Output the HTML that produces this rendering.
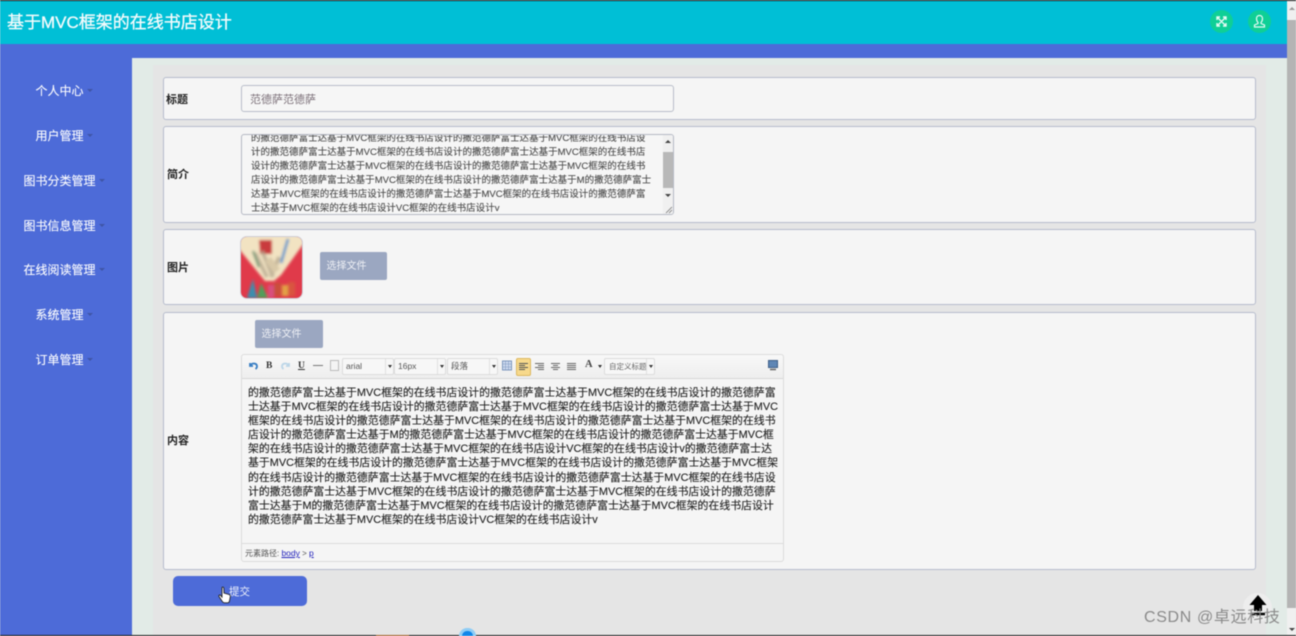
<!DOCTYPE html>
<html lang="zh"><head><meta charset="utf-8"><title>基于MVC框架的在线书店设计</title>
<style>
*{box-sizing:border-box}
html,body{margin:0;padding:0;width:1296px;height:636px;overflow:hidden;background:#e5e5e5}
body{font-family:"Liberation Sans","Noto Sans CJK SC",sans-serif;position:relative}
#p{position:absolute;left:0;top:0;width:1296px;height:636px;overflow:hidden;filter:blur(.4px)}
.a{position:absolute}
.t{position:absolute;white-space:nowrap}
.card{position:absolute;left:163px;width:1093px;background:#f5f5f5;border:1px solid #b6bccd;border-radius:3px}
.m{position:absolute;white-space:nowrap;color:#fff;font-size:12px;line-height:16px;text-align:center;left:0;width:132px;padding-right:13px;-webkit-text-stroke:.1px #fff}
.c{position:absolute;width:0;height:0;border-left:3.5px solid transparent;border-right:3.5px solid transparent;border-top:3px solid #3f55a6}
.lb{position:absolute;left:167px;font-size:11px;font-weight:bold;color:#222;line-height:14px;white-space:nowrap}
.ta{position:absolute;left:250px;font-size:9.53px;line-height:14px;color:#4a4a4a;white-space:nowrap;-webkit-text-stroke:.1px #4a4a4a}
.ed{position:absolute;left:248px;font-size:10.9px;line-height:14px;color:#222;white-space:nowrap;-webkit-text-stroke:.12px #222}
.file{position:absolute;background:#9ba7c1;border-radius:2px;color:#eef0f5;font-size:10px;line-height:30px;padding-left:6.500px}
.sel{position:absolute;top:358px;height:17px;background:#f7f7f7;border:1px solid #dcdcdc;border-radius:2px;font-size:8.500px;line-height:15px;color:#555;padding-left:3px;white-space:nowrap}
.sel:before{content:"";position:absolute;right:7px;top:0;height:15px;width:1px;background:#e0e0e0}
.sel:after{content:"";position:absolute;right:1px;top:6px;border-left:2px solid transparent;border-right:2px solid transparent;border-top:3px solid #333}
.ic{position:absolute;top:360px}
</style></head><body><div id="p">

<div class="a" style="left:0;top:0;width:1296px;height:1px;background:#111"></div>
<div class="a" style="left:0;top:1px;width:1287px;height:43px;background:#00bfd6"></div>
<div class="a" style="left:0;top:44px;width:1287px;height:14px;background:#4d6bd8"></div>
<div class="a" style="left:0;top:58px;width:132px;height:578px;background:#4d6bd8"></div>
<div class="a" style="left:132px;top:58px;width:1155px;height:578px;background:#e2ebe7"></div>
<div class="a" style="left:153px;top:65px;width:1113px;height:571px;background:#e5e5e5"></div>

<div class="t" style="left:7px;top:11px;font-size:17px;line-height:24px;color:#f4fbfc;-webkit-text-stroke:.3px #f4fbfc">基于MVC框架的在线书店设计</div>

<div class="a" style="left:1210px;top:10px;width:23px;height:23px;border-radius:50%;background:#0fcf96"></div>
<svg class="a" style="left:1210px;top:10px" width="23" height="23" viewBox="0 0 23 23" fill="none" stroke="#e8fbf5" stroke-width="1.4"><path d="M7.500 7.500l8 8M15.500 7.500l-8 8M7 10V7h3M13 7h3v3M16 13v3h-3M10 16H7v-3"/></svg>
<div class="a" style="left:1248px;top:10px;width:23px;height:23px;border-radius:50%;background:#0fcf96"></div>
<svg class="a" style="left:1248px;top:10px" width="23" height="23" viewBox="0 0 23 23" fill="none" stroke="#e8fbf5" stroke-width="1.2"><path d="M11.500 5.500c-2 0-3 1.300-3 3s1 3.500 1.500 4v1l-3.500 1.500v2h10v-2L13 13.500v-1c.5-.5 1.500-2.300 1.500-4s-1-3-3-3z"/></svg>

<div class="a" style="left:1287px;top:1px;width:9px;height:634px;background:#f0f0f0"></div>
<div class="a" style="left:1287px;top:20px;width:9px;height:588px;background:#b4b4b4"></div>
<div class="a" style="left:1289px;top:7px;border-left:3px solid transparent;border-right:3px solid transparent;border-bottom:3px solid #999"></div>
<div class="a" style="left:1289px;top:628px;border-left:3px solid transparent;border-right:3px solid transparent;border-top:3px solid #444"></div>

<div class="m" style="top:83px">个人中心</div><div class="c" style="left:87px;top:89px"></div>
<div class="m" style="top:128px">用户管理</div><div class="c" style="left:87px;top:134px"></div>
<div class="m" style="top:173px">图书分类管理</div><div class="c" style="left:99px;top:179px"></div>
<div class="m" style="top:218px">图书信息管理</div><div class="c" style="left:99px;top:224px"></div>
<div class="m" style="top:262px">在线阅读管理</div><div class="c" style="left:99px;top:268px"></div>
<div class="m" style="top:307px">系统管理</div><div class="c" style="left:87px;top:313px"></div>
<div class="m" style="top:352px">订单管理</div><div class="c" style="left:87px;top:358px"></div>

<div class="card" style="top:77px;height:43px"></div>
<div class="lb" style="top:92.500px;left:166px">标题</div>
<div class="a" style="left:241px;top:85px;width:433px;height:27px;background:#f6f6f6;border:1px solid #b9bdc9;border-radius:3px"></div>
<div class="t" style="left:250px;top:93px;font-size:11px;line-height:14px;color:#7b6f78">范德萨范德萨</div>

<div class="card" style="top:126px;height:97px"></div>
<div class="lb" style="top:168px">简介</div>
<div class="a" style="left:241px;top:134px;width:433px;height:81px;background:#f6f6f6;border:1px solid #b5b9c4;border-radius:3px;overflow:hidden">
 <div style="position:absolute;left:-241px;top:-134px;width:433px;height:81px">
  <div class="ta" style="top:130.500px">的撒范德萨富士达基于MVC框架的在线书店设计的撒范德萨富士达基于MVC框架的在线书店设</div>
  <div class="ta" style="top:144.500px">计的撒范德萨富士达基于MVC框架的在线书店设计的撒范德萨富士达基于MVC框架的在线书店</div>
  <div class="ta" style="top:158.500px">设计的撒范德萨富士达基于MVC框架的在线书店设计的撒范德萨富士达基于MVC框架的在线书</div>
  <div class="ta" style="top:172.500px">店设计的撒范德萨富士达基于MVC框架的在线书店设计的撒范德萨富士达基于M的撒范德萨富士</div>
  <div class="ta" style="top:186.500px">达基于MVC框架的在线书店设计的撒范德萨富士达基于MVC框架的在线书店设计的撒范德萨富</div>
  <div class="ta" style="top:201px">士达基于MVC框架的在线书店设计VC框架的在线书店设计v</div>
 </div>
 <div class="a" style="left:421px;top:0;width:10px;height:79px;background:#f0f0f0"></div>
 <div class="a" style="left:421px;top:17px;width:10px;height:36px;background:#b8b8b8"></div>
 <div class="a" style="left:423px;top:5px;border-left:3px solid transparent;border-right:3px solid transparent;border-bottom:3px solid #444"></div>
 <div class="a" style="left:423px;top:59px;border-left:3px solid transparent;border-right:3px solid transparent;border-top:3px solid #444"></div>
</div>
<svg class="a" style="left:665px;top:206px" width="8" height="8" viewBox="0 0 8 8" stroke="#777" stroke-width=".8"><path d="M1 7l6-6M4 7l3-3"/></svg>

<div class="card" style="top:229px;height:76px"></div>
<div class="lb" style="top:261px">图片</div>
<svg class="a" style="left:241px;top:237px;border-radius:6px;box-shadow:0 0 0 1px #d0d0d8" width="61" height="61" viewBox="0 0 61 61">
 <defs><filter id="b" x="-5%" y="-5%" width="110%" height="110%"><feGaussianBlur stdDeviation="1.300"/></filter></defs>
 <rect width="61" height="61" fill="#e03a4a"/>
 <g filter="url(#b)">
 <path d="M-2 -2h65v8L40 38 33 44H24L-2 12z" fill="#f2e3c2"/>
 <path d="M18 3h13v14H19z" fill="#c93a3e"/>
 <path d="M21 14L32 40M38 20L30 40M14 16L26 40" stroke="#b4a78e" stroke-width="4" fill="none" opacity=".75"/>
 <path d="M27 22L36 34" stroke="#d9c9a8" stroke-width="7" fill="none"/>
 <path d="M47 2L40 26" stroke="#6f9ecb" stroke-width="3"/>
 <path d="M12 14L18 30" stroke="#7f9e7c" stroke-width="2.500"/>
 <path d="M6 61L12 42 16 61z" fill="#3b8fae"/>
 <path d="M16 61L20 46 27 61z" fill="#4f9f5a"/>
 <rect x="27" y="48" width="6" height="13" fill="#d8507e"/>
 <rect x="33" y="46" width="7" height="13" fill="#c9503a"/>
 <rect x="41" y="48" width="6" height="11" fill="#e2a044"/>
 <rect x="47" y="45" width="7" height="14" fill="#d9553f"/>
 </g>
</svg>
<div class="file" style="left:320px;top:252px;width:67px;height:28px">选择文件</div>

<div class="card" style="top:312px;height:258px"></div>
<div class="lb" style="top:434px">内容</div>
<div class="file" style="left:255px;top:320px;width:68px;height:28px">选择文件</div>

<div class="a" style="left:241px;top:354px;width:543px;height:208px;background:#f5f5f5;border:1px solid #dcdcdc;border-radius:3px"></div>
<div class="a" style="left:242px;top:355px;width:541px;height:24px;background:linear-gradient(#f8f8f8,#eeeeee);border-bottom:1px solid #d8d8d8;border-radius:3px 3px 0 0"></div>

<svg class="ic" style="left:248px;top:360px" width="11" height="11" viewBox="0 0 11 11" fill="none" stroke="#3a7fc4" stroke-width="1.800"><path d="M2 3v3h3M2.500 5.500C4 2.500 9 3 9 6.500c0 1.300-.8 2-1.500 2.500"/></svg>
<div class="t" style="left:266px;top:360px;font:bold 9.500px/13px 'Liberation Serif',serif;color:#333">B</div>
<svg class="ic" style="left:280px;top:360px" width="11" height="11" viewBox="0 0 11 11" fill="none" stroke="#bcd6e8" stroke-width="1.800"><path d="M9 3v3H6M8.500 5.500C7 2.500 2 3 2 6.500c0 1.300.8 2 1.500 2.500"/></svg>
<div class="t" style="left:298px;top:360px;font:bold 9.500px/12px 'Liberation Serif',serif;color:#333;text-decoration:underline">U</div>
<div class="a" style="left:313px;top:365px;width:10px;height:1px;background:#777"></div>
<div class="a" style="left:330px;top:360px;width:9px;height:11px;background:#f4f4f4;border:1px solid #bbb"></div>
<div class="sel" style="left:342px;width:52px">arial</div>
<div class="sel" style="left:394px;width:52px">16px</div>
<div class="sel" style="left:447px;width:51px">段落</div>
<svg class="ic" style="left:502px;top:360px" width="10" height="11" viewBox="0 0 10 11"><rect x=".5" y="1" width="9" height="9" fill="#cfdcf0" stroke="#7d97bd"/><path d="M.5 4h9M.5 7h9M3.500 1v9M6.500 1v9" stroke="#7d97bd" stroke-width=".6"/></svg>
<div class="a" style="left:516px;top:358px;width:15px;height:18px;background:#f7d98c;border:1px solid #dcb860;border-radius:2px"></div>
<svg class="ic" style="left:519px;top:362px" width="10" height="10" stroke="#555" stroke-width="1"><path d="M0 1.500h9M0 3.500h6M0 5.500h9M0 7.500h6"/></svg>
<svg class="ic" style="left:535px;top:362px" width="10" height="10" stroke="#666" stroke-width="1"><path d="M0 1.500h9M3 3.500h6M0 5.500h9M3 7.500h6"/></svg>
<svg class="ic" style="left:551px;top:362px" width="10" height="10" stroke="#666" stroke-width="1"><path d="M0 1.500h9M2 3.500h5M0 5.500h9M2 7.500h5"/></svg>
<svg class="ic" style="left:567px;top:362px" width="10" height="10" stroke="#666" stroke-width="1"><path d="M0 1.500h9M0 3.500h9M0 5.500h9M0 7.500h9"/></svg>
<div class="t" style="left:585px;top:358px;font:bold 10.500px/14px 'Liberation Serif',serif;color:#444">A</div>
<div class="a" style="left:598px;top:365px;border-left:2px solid transparent;border-right:2px solid transparent;border-top:3px solid #333"></div>
<div class="sel" style="left:604px;width:51px;color:#666;font-size:7.500px;padding-left:4px">自定义标题</div>
<svg class="ic" style="left:768px;top:360px" width="10" height="11" viewBox="0 0 10 11"><rect x=".5" y=".5" width="9" height="7" fill="#5e86b5" stroke="#3e5f88"/><path d="M2 9.500h6" stroke="#666" stroke-width="1.500"/></svg>

<div class="ed" style="top:385.500px">的撒范德萨富士达基于MVC框架的在线书店设计的撒范德萨富士达基于MVC框架的在线书店设计的撒范德萨富</div>
<div class="ed" style="top:399.500px">士达基于MVC框架的在线书店设计的撒范德萨富士达基于MVC框架的在线书店设计的撒范德萨富士达基于MVC</div>
<div class="ed" style="top:413.500px">框架的在线书店设计的撒范德萨富士达基于MVC框架的在线书店设计的撒范德萨富士达基于MVC框架的在线书</div>
<div class="ed" style="top:428px">店设计的撒范德萨富士达基于M的撒范德萨富士达基于MVC框架的在线书店设计的撒范德萨富士达基于MVC框</div>
<div class="ed" style="top:442px">架的在线书店设计的撒范德萨富士达基于MVC框架的在线书店设计VC框架的在线书店设计v的撒范德萨富士达</div>
<div class="ed" style="top:456px">基于MVC框架的在线书店设计的撒范德萨富士达基于MVC框架的在线书店设计的撒范德萨富士达基于MVC框架</div>
<div class="ed" style="top:470.500px">的在线书店设计的撒范德萨富士达基于MVC框架的在线书店设计的撒范德萨富士达基于MVC框架的在线书店设</div>
<div class="ed" style="top:484.500px">计的撒范德萨富士达基于MVC框架的在线书店设计的撒范德萨富士达基于MVC框架的在线书店设计的撒范德萨</div>
<div class="ed" style="top:499px">富士达基于M的撒范德萨富士达基于MVC框架的在线书店设计的撒范德萨富士达基于MVC框架的在线书店设计</div>
<div class="ed" style="top:513px">的撒范德萨富士达基于MVC框架的在线书店设计VC框架的在线书店设计v</div>

<div class="a" style="left:242px;top:543px;width:541px;height:1px;background:#dcdcdc"></div>
<div class="t" style="left:245px;top:547px;font-size:8px;line-height:12px;color:#555">元素路径: <span style="color:#2222bb;text-decoration:underline;font-size:8.500px">body</span> &gt; <span style="color:#2222bb;text-decoration:underline;font-size:8.500px">p</span></div>

<div class="a" style="left:173px;top:576px;width:134px;height:30px;background:#4d6bd8;border-radius:5px"></div>
<div class="t" style="left:229px;top:585px;font-size:10.500px;line-height:15px;color:#f0f3fc">提交</div>
<svg class="a" style="left:218px;top:586px" width="14" height="18" viewBox="0 0 14 18"><path d="M4 1.500c.8-.8 1.700-.3 1.800.7L6 7l5 1.500c1 .4 1.500 1 1.300 2.200L11.500 15c-.2 1-1 1.800-2 1.800H6.500c-1 0-1.600-.5-2.200-1.300L1 10.500c-.6-1 .6-2 1.500-1.200L4 11z" fill="#fff" stroke="#222" stroke-width=".9"/></svg>

<div class="a" style="left:0;top:635px;width:1296px;height:1px;background:#1a1a1a"></div>
<div class="a" style="left:376px;top:635px;width:33px;height:1px;background:#a35a20"></div>
<div class="a" style="left:459px;top:628px;width:17px;height:8px;border-radius:9px 9px 0 0;background:#8fcdf5"></div>
<div class="a" style="left:462px;top:631px;width:11px;height:5px;border-radius:6px 6px 0 0;background:#0f86ea"></div>

<div class="a" style="left:1243px;top:593px;width:29px;height:29px;border-radius:50%;background:#ededed"></div>
<svg class="a" style="left:1248px;top:594px" width="20" height="23" viewBox="0 0 20 23"><path d="M10 1L18.500 11H14V17H6V11H1.500z" fill="#000"/><path d="M3 20h14" stroke="#000" stroke-width="2.500"/></svg>
<div class="t" style="left:1144px;top:607px;font-size:16px;line-height:22px;color:#8a8a8a;letter-spacing:.65px">CSDN @卓远科技</div>

</div></body></html>
